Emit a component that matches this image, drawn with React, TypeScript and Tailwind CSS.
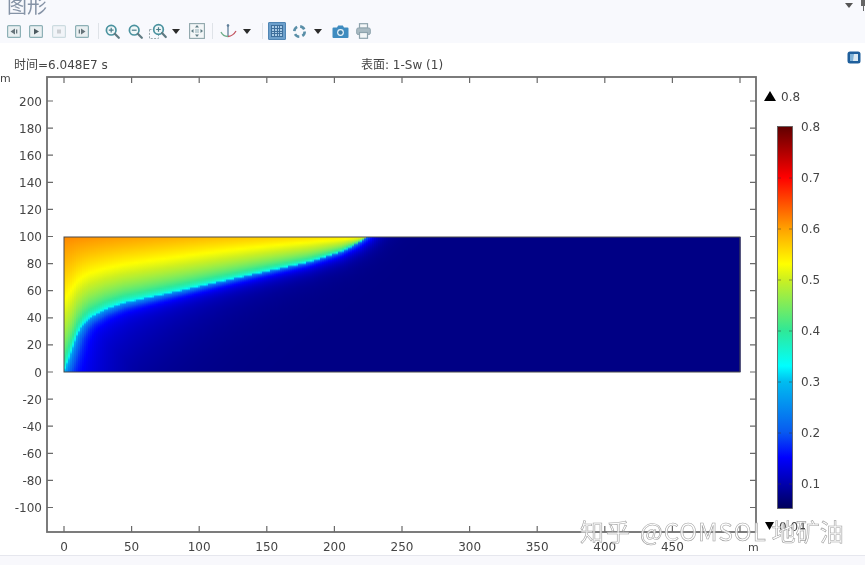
import { useMemo } from "react";

const FONT = "font-['DejaVu_Sans','Noto_Sans_CJK_SC',sans-serif]";

// value -> colour, read off the legend
const STOPS: [number, number[]][] = [
  [0.05, [0, 0, 90]],
  [0.1, [0, 0, 176]],
  [0.15, [0, 0, 255]],
  [0.2, [8, 90, 240]],
  [0.3, [0, 190, 240]],
  [0.33, [0, 255, 255]],
  [0.4, [48, 232, 150]],
  [0.5, [205, 240, 32]],
  [0.53, [255, 255, 0]],
  [0.6, [255, 160, 0]],
  [0.7, [255, 0, 0]],
  [0.8, [96, 0, 0]],
];

function colorOf(v: number) {
  if (v <= STOPS[0][0]) return `rgb(${STOPS[0][1].join(",")})`;
  for (let i = 1; i < STOPS.length; i++) {
    const [b, cb] = STOPS[i];
    const [a, ca] = STOPS[i - 1];
    if (v <= b) {
      const t = (v - a) / (b - a);
      return `rgb(${ca.map((c, k) => Math.round(c + (cb[k] - c) * t)).join(",")})`;
    }
  }
  return "rgb(96,0,0)";
}

const FRONT = [
  [0, 0], [3, 8], [9.4, 27], [14, 35], [19, 40], [30, 46], [44, 51], [81, 59],
  [130, 70], [180, 81], [204, 88.5], [217, 95], [224, 100], [250, 125], [300, 180],
];

function frontY(x: number) {
  for (let i = 1; i < FRONT.length; i++) {
    if (x <= FRONT[i][0]) {
      const [x0, y0] = FRONT[i - 1];
      const [x1, y1] = FRONT[i];
      return y0 + ((y1 - y0) * (x - x0)) / (x1 - x0);
    }
  }
  return 400;
}

function frontDist(x: number, y: number) {
  let best = 1e9;
  for (let i = 1; i < FRONT.length; i++) {
    const [x0, y0] = FRONT[i - 1];
    const [x1, y1] = FRONT[i];
    const dx = x1 - x0;
    const dy = y1 - y0;
    const t = Math.max(0, Math.min(1, ((x - x0) * dx + (y - y0) * dy) / (dx * dx + dy * dy)));
    best = Math.min(best, Math.hypot(x - x0 - t * dx, y - y0 - t * dy));
  }
  return best;
}

function field(x: number, y: number) {
  const yf = frontY(x);
  if (y >= yf) {
    const u = (y - yf) / Math.max(100 - yf, 1);
    const top = 0.615 - 0.07 * (x / 224);
    return 0.3 + (top - 0.3) * Math.pow(u, 0.5);
  }
  const d = frontDist(x, y);
  const wide = 3 + 70 * Math.exp(-x / 90);
  return 0.075 + 0.135 * Math.exp(-d / 4.5) + 0.09 * Math.exp(-x / 120) * Math.exp(-d / wide);
}

const STEPS = 68;

function Heat() {
  const cols = useMemo(() => {
    const out: { id: string; px: number; stops: string[] }[] = [];
    for (let px = 0; px < 676; px += 2) {
      const x = (px + 1) / 1.352;
      const stops: string[] = [];
      for (let s = 0; s <= STEPS; s++) stops.push(colorOf(field(x, 100 - (s / STEPS) * 100)));
      out.push({ id: `col${px}`, px, stops });
    }
    return out;
  }, []);
  return (
    <g>
      <defs>
        {cols.map((c) => (
          <linearGradient key={c.id} id={c.id} x1="0" y1="0" x2="0" y2="1">
            {c.stops.map((s, i) => (
              <stop key={i} offset={i / STEPS} stopColor={s} />
            ))}
          </linearGradient>
        ))}
      </defs>
      {cols.map((c) => (
        <rect key={c.id} x={64 + c.px} y={237} width={2.6} height={135} fill={`url(#${c.id})`} />
      ))}
      <rect x={64} y={237} width={676} height={135} fill="none" stroke="#4a4a4a" strokeWidth={1} />
    </g>
  );
}

function Plot() {
  const yVals = [200, 180, 160, 140, 120, 100, 80, 60, 40, 20, 0, -20, -40, -60, -80, -100];
  const xVals = [0, 50, 100, 150, 200, 250, 300, 350, 400, 450, 500];
  const legend = STOPS.slice()
    .reverse()
    .map(([v, c]) => ({ off: (0.8 - v) / 0.75, c: `rgb(${c.join(",")})` }));
  return (
    <svg viewBox="0 72 865 483" className="block w-[865px] h-[483px]">
      <defs>
        <linearGradient id="legend" x1="0" y1="0" x2="0" y2="1">
          {legend.map((s) => (
            <stop key={s.off} offset={s.off} stopColor={s.c} />
          ))}
        </linearGradient>
      </defs>
      <rect x={47} y={77} width={709} height={455} fill="none" stroke="#6e6e6e" strokeWidth={1.8} />
      {yVals.map((v) => {
        const y = 372 - v * 1.355;
        return (
          <g key={v}>
            <path d={`M47 ${y}h6M756 ${y}h-6`} stroke="#6a6a6a" strokeWidth={1.2} />
            <text x={42} y={y + 4.5} textAnchor="end" fontSize={12} fill="#454545">
              {v}
            </text>
          </g>
        );
      })}
      {xVals.map((v) => {
        const x = 64 + v * 1.352;
        return (
          <g key={v}>
            <path d={`M${x} 532v-6M${x} 77v6`} stroke="#6a6a6a" strokeWidth={1.2} />
            {v < 500 && (
              <text x={x} y={551} textAnchor="middle" fontSize={12} fill="#454545">
                {v}
              </text>
            )}
          </g>
        );
      })}
      <text x={0} y={82} fontSize={11} fill="#454545">m</text>
      <text x={748} y={551} fontSize={11} fill="#454545">m</text>
      <Heat />
      <path d="M764 101l6-10 6 10z" fill="#000" />
      <text x={781} y={101} fontSize={12} fill="#454545">0.8</text>
      <rect x={777.5} y={126.5} width={15} height={382} fill="url(#legend)" stroke="#5a5a5a" strokeWidth={0.8} />
      {[0.8, 0.7, 0.6, 0.5, 0.4, 0.3, 0.2, 0.1].map((v, i) => {
        const y = 127 + i * 51;
        return (
          <g key={v}>
            {i > 0 && <path d={`M778 ${y}h3M792 ${y}h-3`} stroke="#333" strokeWidth={0.8} opacity={0.6} />}
            <text x={801} y={y + 4} fontSize={12} fill="#454545">
              {v.toFixed(1)}
            </text>
          </g>
        );
      })}
      <path d="M765 522l4.5 8 4.5-8z" fill="#000" />
      <text x={779} y={531} fontSize={12} fill="#454545">0.04</text>
    </svg>
  );
}

function MediaBtn({ dir, faded }: { dir: "first" | "play" | "stop" | "last"; faded?: boolean }) {
  return (
    <svg width="14" height="13" viewBox="0 0 14 13" className={faded ? "opacity-40" : ""}>
      <rect x="0.6" y="0.6" width="12.8" height="11.8" rx="1" fill="#e9eff1" stroke="#8db0b6" strokeWidth="1.2" />
      {dir === "first" && <path d="M8 3.5v6L3.5 6.5zM9 4.5h1.3v4H9z" fill="#66747a" />}
      {dir === "play" && <path d="M5 3.5v6l5-3z" fill="#4d5a60" />}
      {dir === "stop" && <rect x="5" y="4.5" width="4" height="4" fill="#8a9094" />}
      {dir === "last" && <path d="M6 3.5v6l4.5-3zM3.7 4.5H5v4H3.7z" fill="#66747a" />}
    </svg>
  );
}

function Lens({ sign }: { sign: "+" | "-" }) {
  return (
    <svg width="15" height="15" viewBox="0 0 15 15" fill="none">
      <circle cx="6.2" cy="6.2" r="4.8" stroke="#4a929f" strokeWidth="1.7" fill="#f0f7f8" />
      <path d="M9.8 9.8L13.8 13.8" stroke="#5f7a82" strokeWidth="2.2" strokeLinecap="round" />
      <path d={sign === "+" ? "M3.8 6.2h4.8M6.2 3.8v4.8" : "M3.8 6.2h4.8"} stroke="#4b7d8a" strokeWidth="1.2" />
    </svg>
  );
}

function Caret() {
  return (
    <svg width="8" height="5" viewBox="0 0 8 5">
      <path d="M0 0h8L4 5z" fill="#2b2b2b" />
    </svg>
  );
}

function Sep() {
  return <div className="w-px h-[16px] bg-[#dfe3e8]" />;
}

function Toolbar() {
  return (
    <div className="flex items-center h-[20px] mt-[12px] pl-[7px]">
      <MediaBtn dir="first" />
      <div className="ml-[8px]"><MediaBtn dir="play" /></div>
      <div className="ml-[9px]"><MediaBtn dir="stop" faded /></div>
      <div className="ml-[9px]"><MediaBtn dir="last" /></div>
      <div className="ml-[9px]"><Sep /></div>
      <div className="ml-[6px]"><Lens sign="+" /></div>
      <div className="ml-[8px]"><Lens sign="-" /></div>
      <div className="ml-[6px]">
        <svg width="19" height="17" viewBox="0 0 19 17" fill="none">
          <rect x="0.5" y="6.5" width="9" height="9" stroke="#9aa8ad" strokeWidth="1" strokeDasharray="2 1.4" />
          <circle cx="9.5" cy="6.5" r="4.8" stroke="#4a929f" strokeWidth="1.7" fill="#f0f7f8" />
          <path d="M13 10L16.8 14" stroke="#5f7a82" strokeWidth="2.2" strokeLinecap="round" />
          <path d="M7.2 6.5h4.6M9.5 4.2v4.6" stroke="#4b7d8a" strokeWidth="1.2" />
        </svg>
      </div>
      <div className="ml-[4px]"><Caret /></div>
      <div className="ml-[9px]">
        <svg width="16" height="16" viewBox="0 0 16 16" fill="none">
          <rect x="0.6" y="0.6" width="14.8" height="14.8" fill="#f3f6f7" stroke="#8fa6ab" strokeWidth="1.1" />
          <path d="M8 2L10 4.5H6zM8 14L6 11.5H10zM2 8L4.5 6V10zM14 8L11.5 10V6z" fill="#5f7d85" />
          <rect x="6" y="6" width="4" height="4" fill="#c3d3d7" />
        </svg>
      </div>
      <div className="ml-[7px]"><Sep /></div>
      <div className="ml-[7px]">
        <svg width="18" height="16" viewBox="0 0 18 16" fill="none">
          <path d="M8 1.5V13.5" stroke="#5f7f9a" strokeWidth="1.3" />
          <path d="M1 9Q3 13.5 8 13.5" stroke="#6fae8a" strokeWidth="1.3" />
          <path d="M8 13.5Q13 13 16 8" stroke="#c25560" strokeWidth="1.3" />
          <circle cx="8" cy="2.5" r="1.3" fill="#5f7f9a" />
        </svg>
      </div>
      <div className="ml-[5px]"><Caret /></div>
      <div className="ml-[11px]"><Sep /></div>
      <div className="ml-[5px] w-[18px] h-[18px] bg-[#6c9fcb] border border-[#4f85b4] rounded-[1px] flex items-center justify-center">
        <div className="grid grid-cols-4 gap-px w-[12px] h-[12px] bg-[#3e6f9c] p-px">
          {Array.from({ length: 16 }).map((_, i) => (
            <div key={i} className="bg-[#a9cbe6]" />
          ))}
        </div>
      </div>
      <div className="ml-[6px]">
        <svg width="15" height="15" viewBox="0 0 15 15" fill="none">
          <circle cx="7.5" cy="7.5" r="5.2" stroke="#5a8fa8" strokeWidth="2.6" strokeDasharray="5 3.2" />
        </svg>
      </div>
      <div className="ml-[7px]"><Caret /></div>
      <div className="ml-[10px]">
        <svg width="17" height="13" viewBox="0 0 17 13">
          <path d="M1.5 2.5H5L6.2.5h4.6L12 2.5h3.5A1 1 0 0 1 16.5 3.5V12a1 1 0 0 1-1 1h-14a1 1 0 0 1-1-1V3.5a1 1 0 0 1 1-1z" fill="#3f8cc0" />
          <circle cx="8.5" cy="7.5" r="3.4" fill="#eaf4fa" />
          <circle cx="8.5" cy="7.5" r="2.2" fill="#3f7fa8" />
        </svg>
      </div>
      <div className="ml-[7px]">
        <svg width="15" height="16" viewBox="0 0 15 16" fill="none">
          <rect x="3.5" y="0.7" width="8" height="4.5" stroke="#8ea3ad" strokeWidth="1.2" fill="#f4f7f8" />
          <rect x="0.7" y="5" width="13.6" height="6.5" rx="1.5" fill="#a9bac2" stroke="#8ea3ad" />
          <rect x="3.5" y="9.5" width="8" height="5.8" stroke="#8ea3ad" strokeWidth="1.2" fill="#f4f7f8" />
        </svg>
      </div>
    </div>
  );
}

export default function App() {
  return (
    <div className={`relative w-[865px] h-[565px] overflow-hidden bg-white blur-[0.5px] ${FONT}`}>
      <div className="relative h-[43px] overflow-hidden bg-[#f8f9fd]">
        <div className="h-[16px] pl-[7px] -mt-[7px] text-[20px] leading-[23px] text-[#8593a6] font-['Noto_Sans_CJK_SC',sans-serif]">
          图形
        </div>
        <Toolbar />
        <svg width="22" height="12" viewBox="0 0 22 12" className="absolute top-0 right-0">
          <path d="M2 3h8L6 8z" fill="#555" />
          <path d="M18 0h4v6h-1v5h-1V6h-2z" fill="#666" />
        </svg>
      </div>
      <div className="relative flex items-end h-[29px] text-[12px] leading-[13px] text-[#454545]">
        <span className="w-[361px] pl-[14px]">时间=6.048E7 s</span>
        <span>表面: 1-Sw (1)</span>
        <svg width="14" height="13" viewBox="0 0 14 13" className="absolute right-[4px] top-[8px]">
          <rect x="0.5" y="0.5" width="13" height="12" rx="2.5" fill="#1f5f9c" />
          <path d="M3 3h8v7H3z" fill="#dbe9f2" />
          <path d="M3 3h4l-1 7H3z" fill="#7fb2d8" />
        </svg>
      </div>
      <Plot />
      <div className="h-[10px] border-t border-[#e6e7ee] bg-[#f8f8fc]" />
      <div className="absolute left-[580px] top-[516px] flex items-center text-[24px] leading-[30px] text-white/80 [-webkit-text-stroke:0.6px_#a0a0a0] font-['Noto_Sans_CJK_SC',sans-serif]">
        <span className="tracking-[2px]">知乎</span>
        <span className="ml-[8px] tracking-[1px]">@COMSOL</span>
        <span className="ml-[5px]">地矿油</span>
      </div>
    </div>
  );
}
